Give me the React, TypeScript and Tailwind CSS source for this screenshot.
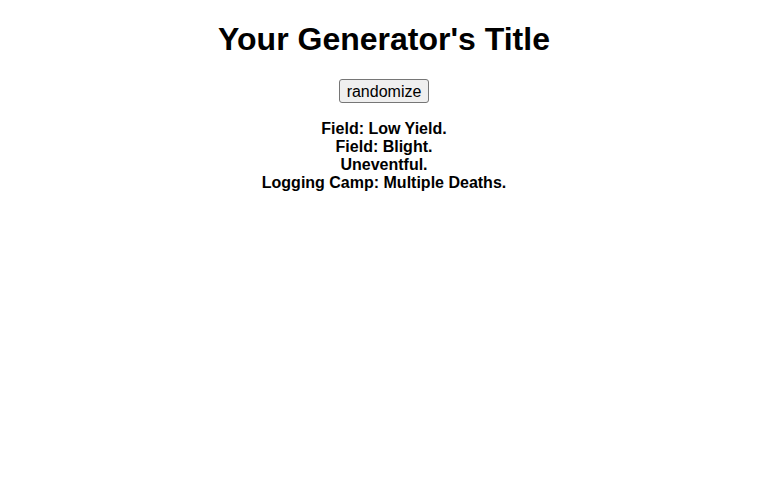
export default function App() {
  const events = [
    "Field: Low Yield.",
    "Field: Blight.",
    "Uneventful.",
    "Logging Camp: Multiple Deaths.",
  ];
  return (
    <div className="min-h-[480px] bg-white text-black text-center font-['Liberation_Sans',Arial,sans-serif]">
      <h1 className="pt-[21px] mb-[21px] text-[32px] font-bold leading-[37px]">
        Your Generator's Title
      </h1>
      <button className="h-[24px] px-[7px] text-[16px] leading-[19px] text-black bg-[#efefef] border border-[#767676] rounded-[3px]">
        randomize
      </button>
      <div className="mt-[16px] text-[16px] font-bold leading-[18px]">
        {events.map((e) => (
          <div key={e}>{e}</div>
        ))}
      </div>
    </div>
  );
}
